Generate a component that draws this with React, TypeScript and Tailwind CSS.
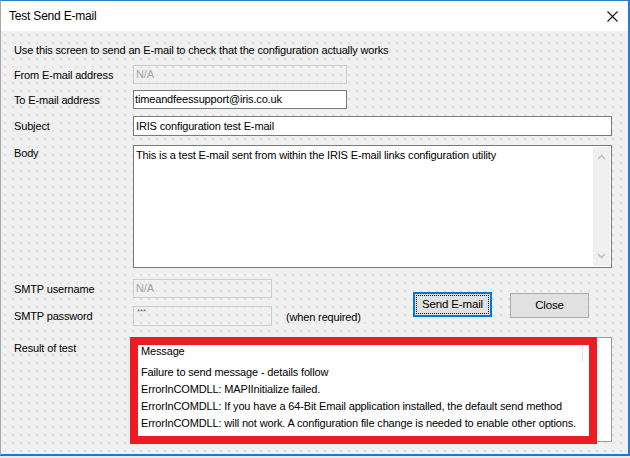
function Chevron({ up }: { up?: boolean }) {
  return (
    <svg width="9" height="6" viewBox="0 0 9 6" className="block">
      <path
        d={up ? 'M1 5 L4.5 1.5 L8 5' : 'M1 1 L4.5 4.5 L8 1'}
        fill="none"
        stroke="#c2c2c2"
        strokeWidth="1.6"
      />
    </svg>
  )
}

function Label({ children, className = '' }: { children: React.ReactNode; className?: string }) {
  return <div className={`w-[119px] shrink-0 leading-[14px] ${className}`}>{children}</div>
}

const lines = [
  'Failure to send message - details follow',
  'ErrorInCOMDLL: MAPIInitialize failed.',
  'ErrorInCOMDLL: If you have a 64-Bit Email application installed, the default send method',
  'ErrorInCOMDLL: will not work. A configuration file change is needed to enable other options.',
]

export default function App() {
  return (
    <div className="w-[630px] h-[458px] bg-[#e9e9e9] font-['Liberation_Sans',Arial,sans-serif] text-[11px] tracking-[-0.15px] text-black">
      <div className="flex h-[456px] flex-col border-t border-r-2 border-b-2 border-l border-t-[#2b7ad0] border-r-[#2b7ad0] border-b-[#1979ca] border-l-[#a8a8a8]">
        {/* title bar */}
        <div className="flex h-[30px] shrink-0 items-center justify-between bg-white pl-[8px] pr-[9px]">
          <span className="text-[12px] leading-[14px] tracking-[-0.2px]">Test Send E-mail</span>
          <svg width="11" height="11" viewBox="0 0 11 11" className="mr-[1px]">
            <path d="M0.5 0.5 L10.5 10.5 M10.5 0.5 L0.5 10.5" stroke="#111" strokeWidth="1.1" />
          </svg>
        </div>

        {/* body */}
        <div className="flex-1 bg-[#f0f0f0] bg-[radial-gradient(#dadada_0.6px,transparent_0.9px)] bg-[size:8px_8px] pl-[13px] pt-[12px]">
          <div className="h-[14px] leading-[14px]">
            Use this screen to send an E-mail to check that the configuration actually works
          </div>

          <div className="mt-[8px] flex h-[19px] items-center">
            <Label>From E-mail address</Label>
            <div className="flex h-[19px] w-[214px] items-center border border-[#cccccc] pl-[2px] text-[#a3a3a3]">
              N/A
            </div>
          </div>

          <div className="mt-[6px] flex h-[19px] items-center">
            <Label>To E-mail address</Label>
            <div className="flex h-[19px] w-[214px] items-center border border-[#7a7a7a] bg-white pl-[1px]">
              timeandfeessupport@iris.co.uk
            </div>
          </div>

          <div className="mt-[7px] flex h-[20px] items-center">
            <Label>Subject</Label>
            <div className="flex h-[20px] w-[479px] items-center border border-[#7a7a7a] bg-white pl-[2px]">
              IRIS configuration test E-mail
            </div>
          </div>

          <div className="mt-[9px] flex h-[123px]">
            <Label className="pt-[1px]">Body</Label>
            <div className="flex h-[123px] w-[479px] border border-[#7a7a7a] bg-white">
              <div className="flex-1 pl-[2px] pt-[2px] leading-[14px]">
                This is a test E-mail sent from within the IRIS E-mail links configuration utility
              </div>
              <div className="my-[1px] mr-[1px] flex w-[17px] flex-col items-center justify-between bg-[#f0f0f0] pt-[7px] pb-[7px]">
                <Chevron up />
                <Chevron />
              </div>
            </div>
          </div>

          <div className="mt-[11px] flex">
            <div className="w-[399px] shrink-0">
              <div className="flex h-[19px] items-center">
                <Label>SMTP username</Label>
                <div className="flex h-[19px] w-[139px] items-center border border-[#cccccc] pl-[2px] text-[#a3a3a3]">
                  N/A
                </div>
              </div>
              <div className="mt-[8px] flex h-[20px] items-center">
                <Label>SMTP password</Label>
                <div className="h-[20px] w-[139px] border border-[#cccccc] pl-[3px] text-[8px] leading-[10px] text-[#6d6d6d]">
                  ***
                </div>
                <span className="ml-[14px] mt-[2px]">(when required)</span>
              </div>
            </div>
            <div className="mt-[13px] flex items-start gap-[18px]">
              <button className="h-[25px] w-[79px] border-2 border-[#0078d7] bg-[#e1e1e1] p-[1px] text-[11.5px]">
                <div className="flex h-full w-full items-center justify-center border border-dotted border-black">
                  Send E-mail
                </div>
              </button>
              <button className="mt-[1px] h-[25px] w-[79px] border border-[#adadad] bg-[#e1e1e1] text-[11.5px]">
                Close
              </button>
            </div>
          </div>

          <div className="mt-[11px] flex">
            <Label className="pt-[4px]">Result of test</Label>
            <div className="relative h-[105px] w-[479px] border border-[#9a9a9a] bg-white">
              <div className="flex h-[24px]">
                <div className="w-[449px] border-r border-[#e2e2e2] pl-[7px] pt-[6px] leading-[14px]">
                  Message
                </div>
              </div>
              <div className="pl-[7px] pt-[2px]">
                {lines.map((l) => (
                  <div key={l} className="whitespace-nowrap leading-[17px]">
                    {l}
                  </div>
                ))}
              </div>
              {/* red annotation */}
              <div className="absolute left-[-4px] top-[-1px] h-[107px] w-[467px] border-[8px] border-[#ed1c24]" />
            </div>
          </div>
        </div>
      </div>
    </div>
  )
}
